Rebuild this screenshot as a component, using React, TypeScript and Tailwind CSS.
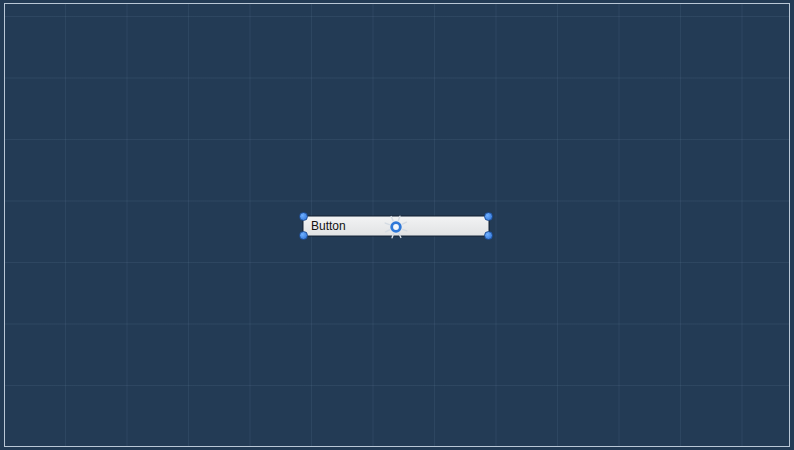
import React from "react";

const rays = [20, 65, 110, 155, 200, 245, 290, 335];

export default function App() {
  return (
    <div className="w-[794px] h-[450px] bg-[#233b55] pt-[3px] pl-[4px] overflow-hidden" style={{ fontFamily: '"Liberation Sans", Arial, sans-serif' }}>
      <div className="relative w-[786px] h-[444px] border border-[#b9c7d6] bg-[linear-gradient(to_right,rgba(140,170,200,0.1)_1px,transparent_1px),linear-gradient(to_bottom,rgba(140,170,200,0.1)_1px,transparent_1px)] bg-[length:61.5px_61.5px] bg-[position:60px_12px]">
        {/* Button element on canvas */}
        <div className="absolute left-[298px] top-[212px] w-[186px] h-[20px] rounded-[3px] border border-[#7d8792] bg-[linear-gradient(to_bottom,rgba(250,250,250,0.96),rgba(236,236,236,0.95))] shadow-[0_0_0_1px_rgba(20,30,45,0.5)] flex items-center pl-[7px]">
          <span className="text-[12px] leading-none text-[#111]">Button</span>
        </div>
        {/* corner handles */}
        <div className="absolute left-[294px] top-[208px] w-[9px] h-[9px] rounded-full bg-[radial-gradient(circle_at_35%_35%,#6fb0ff,#2a6fd6)] border border-[#1f4f96]" />
        <div className="absolute left-[479px] top-[208px] w-[9px] h-[9px] rounded-full bg-[radial-gradient(circle_at_35%_35%,#6fb0ff,#2a6fd6)] border border-[#1f4f96]" />
        <div className="absolute left-[294px] top-[227px] w-[9px] h-[9px] rounded-full bg-[radial-gradient(circle_at_35%_35%,#6fb0ff,#2a6fd6)] border border-[#1f4f96]" />
        <div className="absolute left-[479px] top-[227px] w-[9px] h-[9px] rounded-full bg-[radial-gradient(circle_at_35%_35%,#6fb0ff,#2a6fd6)] border border-[#1f4f96]" />
        {/* pivot */}
        <svg className="absolute left-[379px] top-[211px]" width="24" height="24" viewBox="0 0 24 24">
          {rays.map((a) => {
            const r = (a * Math.PI) / 180;
            const x1 = 12 + Math.sin(r) * 7;
            const y1 = 12 - Math.cos(r) * 7;
            const x2 = 12 + Math.sin(r) * 11.5;
            const y2 = 12 - Math.cos(r) * 11.5;
            return <line key={a} x1={x1} y1={y1} x2={x2} y2={y2} stroke="#d4dbe3" strokeWidth="1.4" strokeLinecap="round" />;
          })}
          <circle cx="12" cy="12" r="4.3" fill="#f4f7fb" stroke="#2f78d8" strokeWidth="2.8" />
        </svg>
      </div>
    </div>
  );
}
